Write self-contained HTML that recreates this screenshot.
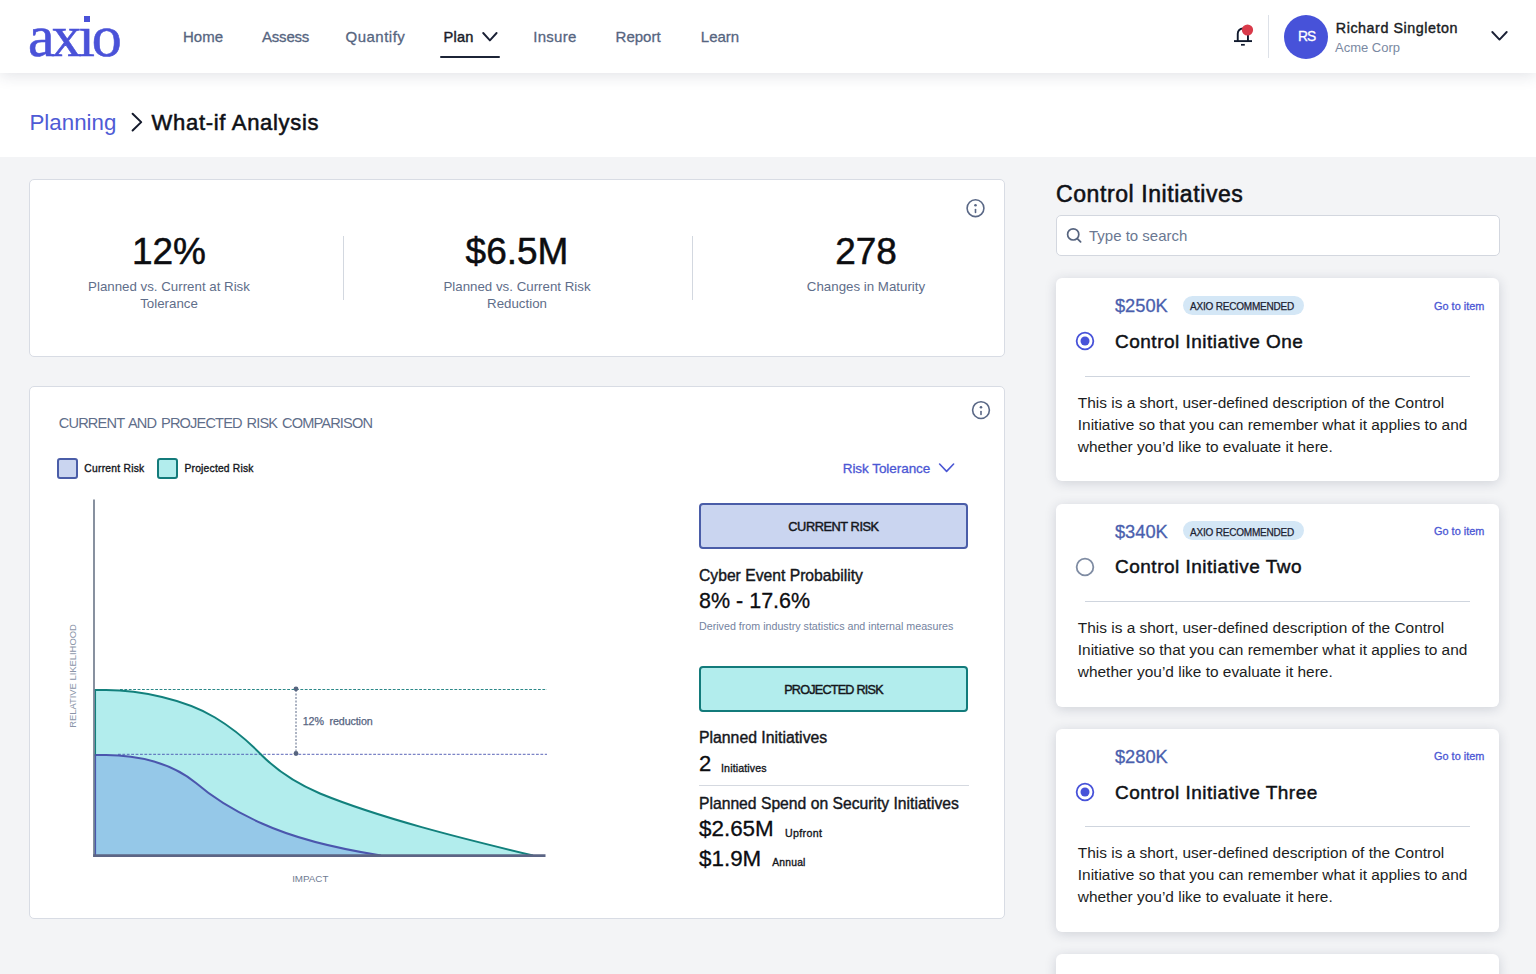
<!DOCTYPE html>
<html><head><meta charset="utf-8"><title>What-if Analysis</title>
<style>
html,body{margin:0;padding:0;}
body{width:1536px;height:974px;position:relative;overflow:hidden;background:#f3f4f6;font-family:"Liberation Sans", sans-serif;}
.t{position:absolute;line-height:1;white-space:nowrap;}
.b{position:absolute;}
svg.b{overflow:visible;}
</style></head><body>
<div class="b" style="left:0px;top:0px;width:1536px;height:73px;background:#fff;box-shadow:0 3px 14px rgba(40,50,80,0.13);z-index:2;"></div>
<div class="b" style="left:0px;top:73px;width:1536px;height:84px;background:#fff;"></div>
<div class='t' style='left:28px;top:5.50px;font-size:60px;color:#4a52d8;font-family:"Liberation Serif", serif;letter-spacing:-3.2px;z-index:3;-webkit-text-stroke:0.6px #4a52d8;'>axio</div>
<div class="b" style="left:80.5px;top:13.5px;width:12px;height:13px;background:#fff;z-index:4;"></div>
<div class="b" style="left:84.3px;top:16.1px;width:5.8px;height:5.7px;background:#4a52d8;z-index:5;"></div>
<div class='t' style='left:183px;top:29.20px;font-size:15px;color:#56657f;z-index:3;-webkit-text-stroke:0.3px #56657f;'>Home</div>
<div class='t' style='left:262px;top:29.20px;font-size:15px;color:#56657f;letter-spacing:-0.2px;z-index:3;-webkit-text-stroke:0.3px #56657f;'>Assess</div>
<div class='t' style='left:345.5px;top:29.20px;font-size:15px;color:#56657f;letter-spacing:0.5px;z-index:3;-webkit-text-stroke:0.3px #56657f;'>Quantify</div>
<div class='t' style='left:533.3px;top:29.20px;font-size:15px;color:#56657f;letter-spacing:0.25px;z-index:3;-webkit-text-stroke:0.3px #56657f;'>Insure</div>
<div class='t' style='left:615.6px;top:29.20px;font-size:15px;color:#56657f;z-index:3;-webkit-text-stroke:0.3px #56657f;'>Report</div>
<div class='t' style='left:700.8px;top:29.20px;font-size:15px;color:#56657f;z-index:3;-webkit-text-stroke:0.3px #56657f;'>Learn</div>
<div class='t' style='left:443.6px;top:29.54px;font-size:14.6px;color:#1a1d2a;letter-spacing:0.2px;z-index:3;-webkit-text-stroke:0.45px #1a1d2a;'>Plan</div>
<svg class="b" style="left:481px;top:30px;z-index:3" width="18" height="14" viewBox="0 0 18 14"><path d="M2.2 3 L8.9 10.4 L15.6 3" fill="none" stroke="#1a2035" stroke-width="1.9" stroke-linecap="round" stroke-linejoin="round"/></svg>
<div class="b" style="left:439.8px;top:55.6px;width:60.2px;height:2.7px;background:#1c2436;border-radius:1px;z-index:3;"></div>
<svg class="b" style="left:1228px;top:20px;z-index:3" width="30" height="30" viewBox="0 0 30 30"><path d="M9.75 21 V13.65 A5.1 5.1 0 0 1 19.95 13.65 V21" fill="none" stroke="#111a2e" stroke-width="1.9"/><path d="M6 21.1 H24" stroke="#111a2e" stroke-width="1.9"/><path d="M13 24.8 H16.8" stroke="#111a2e" stroke-width="1.7"/><circle cx="19.5" cy="10" r="5.6" fill="#d93a4a"/></svg>
<div class="b" style="left:1267.5px;top:15px;width:1.2px;height:43px;background:#dde1e8;z-index:3;"></div>
<div class="b" style="left:1284px;top:14.5px;width:44px;height:44px;background:#4752d9;border-radius:50%;z-index:3;"></div>
<div class='t' style='left:1306.6px;top:30.32px;font-size:13.8px;color:#fff;letter-spacing:-1.1px;transform:translateX(-50%);z-index:3;-webkit-text-stroke:0.3px #fff;'>RS</div>
<div class='t' style='left:1335.8px;top:20.89px;font-size:14.3px;color:#1a1d24;letter-spacing:0.55px;z-index:3;-webkit-text-stroke:0.4px #1a1d24;'>Richard Singleton</div>
<div class='t' style='left:1335px;top:41.39px;font-size:13px;color:#7a89a2;z-index:3;'>Acme Corp</div>
<svg class="b" style="left:1489px;top:28px;z-index:3" width="20" height="16" viewBox="0 0 20 16"><path d="M3.3 4 L10.5 11.6 L17.7 4" fill="none" stroke="#1a2035" stroke-width="1.9" stroke-linecap="round" stroke-linejoin="round"/></svg>
<div class='t' style='left:29.5px;top:111.52px;font-size:22.3px;color:#4f5bd5;'>Planning</div>
<svg class="b" style="left:126px;top:108px" width="22" height="28" viewBox="0 0 22 28"><path d="M6.6 5.8 L15.2 14.1 L6.6 22.5" fill="none" stroke="#141a2c" stroke-width="2" stroke-linecap="round" stroke-linejoin="round"/></svg>
<div class='t' style='left:151.6px;top:111.77px;font-size:22px;color:#0f1116;letter-spacing:0.7px;-webkit-text-stroke:0.55px #0f1116;'>What-if Analysis</div>
<div class="b" style="left:29px;top:178.5px;width:976px;height:178px;background:#fff;border:1px solid #d8dce4;border-radius:5px;box-sizing:border-box;"></div>
<div class='t' style='left:169px;top:233.07px;font-size:37px;color:#0c0d10;transform:translateX(-50%);-webkit-text-stroke:0.5px #0c0d10;'>12%</div>
<div class='t' style='left:169px;top:279.84px;font-size:13.3px;color:#5f6e8a;transform:translateX(-50%);'>Planned vs. Current at Risk</div>
<div class='t' style='left:169px;top:297.04px;font-size:13.3px;color:#5f6e8a;transform:translateX(-50%);'>Tolerance</div>
<div class='t' style='left:517px;top:233.07px;font-size:37px;color:#0c0d10;transform:translateX(-50%);-webkit-text-stroke:0.5px #0c0d10;'>$6.5M</div>
<div class='t' style='left:517px;top:279.84px;font-size:13.3px;color:#5f6e8a;transform:translateX(-50%);'>Planned vs. Current Risk</div>
<div class='t' style='left:517px;top:297.04px;font-size:13.3px;color:#5f6e8a;transform:translateX(-50%);'>Reduction</div>
<div class='t' style='left:866px;top:233.07px;font-size:37px;color:#0c0d10;transform:translateX(-50%);-webkit-text-stroke:0.5px #0c0d10;'>278</div>
<div class='t' style='left:866px;top:279.84px;font-size:13.3px;color:#5f6e8a;transform:translateX(-50%);'>Changes in Maturity</div>
<div class="b" style="left:342.7px;top:236px;width:1px;height:64px;background:#d3d8e0;"></div>
<div class="b" style="left:692px;top:236px;width:1px;height:64px;background:#d3d8e0;"></div>
<svg class="b" style="left:964px;top:196px" width="24" height="24" viewBox="0 0 24 24"><g transform="translate(-0.50,0.20)"><circle cx="12" cy="12" r="8.4" fill="none" stroke="#5a6886" stroke-width="1.6"/><circle cx="12" cy="9.1" r="1.3" fill="#5a6886"/><path d="M12 13.4 V16.3" stroke="#5a6886" stroke-width="1.6" stroke-linecap="round"/></g></svg>
<div class="b" style="left:29px;top:386px;width:976px;height:533px;background:#fff;border:1px solid #d8dce4;border-radius:5px;box-sizing:border-box;"></div>
<div class='t' style='left:58.8px;top:415.84px;font-size:14.6px;color:#5f6e8a;letter-spacing:-0.85px;word-spacing:1.6px;'>CURRENT AND PROJECTED RISK COMPARISON</div>
<svg class="b" style="left:969px;top:398px" width="24" height="24" viewBox="0 0 24 24"><g transform="translate(0.00,0.10)"><circle cx="12" cy="12" r="8.4" fill="none" stroke="#5a6886" stroke-width="1.6"/><circle cx="12" cy="9.1" r="1.3" fill="#5a6886"/><path d="M12 13.4 V16.3" stroke="#5a6886" stroke-width="1.6" stroke-linecap="round"/></g></svg>
<div class="b" style="left:57px;top:458px;width:21px;height:20.5px;background:#cad5f0;border:2px solid #4a5da8;border-radius:3px;box-sizing:border-box;"></div>
<div class='t' style='left:84.3px;top:464.08px;font-size:10.3px;color:#15171c;letter-spacing:0.25px;-webkit-text-stroke:0.35px #15171c;'>Current Risk</div>
<div class="b" style="left:157.3px;top:458px;width:21px;height:20.5px;background:#b2eded;border:2px solid #137b7b;border-radius:3px;box-sizing:border-box;"></div>
<div class='t' style='left:184.5px;top:464.08px;font-size:10.3px;color:#15171c;letter-spacing:0.2px;-webkit-text-stroke:0.35px #15171c;'>Projected Risk</div>
<div class='t' style='left:842.7px;top:461.57px;font-size:13.5px;color:#4b57d4;letter-spacing:-0.05px;-webkit-text-stroke:0.3px #4b57d4;'>Risk Tolerance</div>
<svg class="b" style="left:936px;top:459px" width="22" height="16" viewBox="0 0 22 16"><path d="M3.6 5 L10.6 12.4 L17.6 5" fill="none" stroke="#4b57d4" stroke-width="1.6" stroke-linecap="round" stroke-linejoin="round"/></svg>
<svg class="b" style="left:0;top:0" width="1536" height="974" viewBox="0 0 1536 974"><path d="M94.5 690.1 L106 690.1 C140 690.1 185 699.5 215 717.5 C235 729.5 250 743 262 755.5 C275 768.5 292 781.5 320 793.5 C380 818 460 838 533 855.5 L94.5 855.5 Z" fill="#b2eded"/><path d="M94.5 754.9 L106 754.9 C138 754.9 172 763 196 783 C211 796 232 810 262 823.5 C296 839 340 849 381 855.5 L94.5 855.5 Z" fill="#95c8e8"/><path d="M120 689.5 H547" stroke="#137b7b" stroke-width="0.9" stroke-dasharray="2.8 1.6"/><path d="M118 754.3 H547" stroke="#4a55b0" stroke-width="0.9" stroke-dasharray="2.8 1.6"/><path d="M296 690 V753" stroke="#5a6886" stroke-width="1" stroke-dasharray="2 1.5"/><circle cx="296" cy="688.8" r="2.4" fill="#56647f"/><circle cx="296" cy="753.5" r="2.4" fill="#56647f"/><path d="M94.5 690.1 L106 690.1 C140 690.1 185 699.5 215 717.5 C235 729.5 250 743 262 755.5 C275 768.5 292 781.5 320 793.5 C380 818 460 838 533 855.5" fill="none" stroke="#12807c" stroke-width="2"/><path d="M94.5 754.9 L106 754.9 C138 754.9 172 763 196 783 C211 796 232 810 262 823.5 C296 839 340 849 381 855.5" fill="none" stroke="#4b56ad" stroke-width="2"/><path d="M95.4 689.5 V855" stroke="#12807c" stroke-width="1.3"/><path d="M95.4 754.3 V855" stroke="#4b56ad" stroke-width="1.3"/><path d="M94 499.5 V857" stroke="#6a7588" stroke-width="1.6"/><path d="M93.2 855.6 H545.5" stroke="#5c6585" stroke-width="2.6"/></svg>
<div class='t' style='left:302.7px;top:715.94px;font-size:10.7px;color:#56647f;letter-spacing:-0.1px;-webkit-text-stroke:0.25px #56647f;'>12%&nbsp; reduction</div>
<div class='t' style='left:310.3px;top:874.00px;font-size:9.8px;color:#6f7b92;transform:translateX(-50%);'>IMPACT</div>
<div class='t' style='left:73.3px;top:668.24px;font-size:9.4px;color:#8a94a8;transform:translate(-50%,-50%) rotate(-90deg);line-height:1;top:676.2px;'>RELATIVE LIKELIHOOD</div>
<div class="b" style="left:699px;top:503.2px;width:269px;height:46px;background:#cad5f0;border:2px solid #4a5da8;border-radius:4px;box-sizing:border-box;"></div>
<div class='t' style='left:833.5px;top:521.06px;font-size:12.8px;color:#15171c;letter-spacing:-0.45px;transform:translateX(-50%);-webkit-text-stroke:0.45px #15171c;'>CURRENT RISK</div>
<div class='t' style='left:699px;top:567.71px;font-size:15.7px;color:#15171c;-webkit-text-stroke:0.4px #15171c;'>Cyber Event Probability</div>
<div class='t' style='left:699px;top:590.60px;font-size:21.5px;color:#0c0d10;-webkit-text-stroke:0.3px #0c0d10;'>8% - 17.6%</div>
<div class='t' style='left:699px;top:620.84px;font-size:10.7px;color:#7483a0;'>Derived from industry statistics and internal measures</div>
<div class="b" style="left:699px;top:666px;width:269px;height:46px;background:#b2eded;border:2px solid #137b7b;border-radius:4px;box-sizing:border-box;"></div>
<div class='t' style='left:833.5px;top:683.93px;font-size:12.6px;color:#15171c;letter-spacing:-0.75px;transform:translateX(-50%);-webkit-text-stroke:0.45px #15171c;'>PROJECTED RISK</div>
<div class='t' style='left:699px;top:730.12px;font-size:15.8px;color:#15171c;-webkit-text-stroke:0.4px #15171c;'>Planned Initiatives</div>
<div class='t' style='left:699px;top:752.87px;font-size:22px;color:#0c0d10;-webkit-text-stroke:0.3px #0c0d10;'>2</div>
<div class='t' style='left:721px;top:762.52px;font-size:10.6px;color:#15171c;letter-spacing:0.15px;-webkit-text-stroke:0.35px #15171c;'>Initiatives</div>
<div class="b" style="left:699px;top:784.5px;width:269.5px;height:1.2px;background:#d5d9e0;"></div>
<div class='t' style='left:699px;top:795.91px;font-size:15.7px;color:#15171c;-webkit-text-stroke:0.4px #15171c;'>Planned Spend on Security Initiatives</div>
<div class='t' style='left:699px;top:818.23px;font-size:22.4px;color:#0c0d10;-webkit-text-stroke:0.3px #0c0d10;'>$2.65M</div>
<div class='t' style='left:785px;top:828.02px;font-size:10.6px;color:#15171c;letter-spacing:0.35px;-webkit-text-stroke:0.35px #15171c;'>Upfront</div>
<div class='t' style='left:699px;top:847.53px;font-size:22.4px;color:#0c0d10;-webkit-text-stroke:0.3px #0c0d10;'>$1.9M</div>
<div class='t' style='left:772.3px;top:857.78px;font-size:10.3px;color:#15171c;letter-spacing:0.2px;-webkit-text-stroke:0.35px #15171c;'>Annual</div>
<div class='t' style='left:1056px;top:182.53px;font-size:23px;color:#0f1116;letter-spacing:0.58px;-webkit-text-stroke:0.55px #0f1116;'>Control Initiatives</div>
<div class="b" style="left:1056px;top:215px;width:444px;height:40.5px;background:#fff;border:1px solid #d3d7df;border-radius:5px;box-sizing:border-box;"></div>
<svg class="b" style="left:1062px;top:223px" width="24" height="24" viewBox="0 0 24 24"><circle cx="11.2" cy="11.4" r="5.6" fill="none" stroke="#56647f" stroke-width="1.7"/><path d="M15.3 15.6 L18.6 18.9" stroke="#56647f" stroke-width="1.8" stroke-linecap="round"/></svg>
<div class='t' style='left:1089px;top:227.90px;font-size:15px;color:#6a7892;'>Type to search</div>
<div class="b" style="left:1056px;top:278px;width:443px;height:203px;background:#fff;border-radius:6px;box-shadow:0 2px 12px rgba(30,40,70,0.17);"></div>
<div class='t' style='left:1114.9px;top:297.21px;font-size:18.3px;color:#4a5fae;-webkit-text-stroke:0.3px #4a5fae;'>$250K</div>
<div class="b" style="left:1182.7px;top:295.7px;width:121px;height:19px;background:#d4e7f6;border-radius:9.5px;"></div>
<div class='t' style='left:1190px;top:302.03px;font-size:10px;color:#1c2333;letter-spacing:-0.2px;-webkit-text-stroke:0.25px #1c2333;'>AXIO RECOMMENDED</div>
<div class='t' style='right:51.700000000000045px;top:300.77px;font-size:10.9px;color:#4b57d4;-webkit-text-stroke:0.3px #4b57d4;'>Go to item</div>
<svg class="b" style="left:1075px;top:331px" width="20" height="20" viewBox="0 0 20 20"><circle cx="10" cy="10" r="8.35" fill="none" stroke="#4752d9" stroke-width="1.8"/><circle cx="10" cy="10" r="4.5" fill="#4752d9"/></svg>
<div class='t' style='left:1115px;top:331.91px;font-size:19px;color:#0f1116;letter-spacing:0.5px;-webkit-text-stroke:0.45px #0f1116;'>Control Initiative One</div>
<div class="b" style="left:1085px;top:375.5px;width:385px;height:1px;background:#cfd5de;"></div>
<div class='t' style='left:1077.8px;top:394.72px;font-size:15.45px;color:#1b1d22;'>This is a short, user-defined description of the Control</div>
<div class='t' style='left:1077.8px;top:416.72px;font-size:15.45px;color:#1b1d22;'>Initiative so that you can remember what it applies to and</div>
<div class='t' style='left:1077.8px;top:438.72px;font-size:15.45px;color:#1b1d22;'>whether you’d like to evaluate it here.</div>
<div class="b" style="left:1056px;top:503.5px;width:443px;height:203px;background:#fff;border-radius:6px;box-shadow:0 2px 12px rgba(30,40,70,0.17);"></div>
<div class='t' style='left:1114.9px;top:522.71px;font-size:18.3px;color:#4a5fae;-webkit-text-stroke:0.3px #4a5fae;'>$340K</div>
<div class="b" style="left:1182.7px;top:521.2px;width:121px;height:19px;background:#d4e7f6;border-radius:9.5px;"></div>
<div class='t' style='left:1190px;top:527.53px;font-size:10px;color:#1c2333;letter-spacing:-0.2px;-webkit-text-stroke:0.25px #1c2333;'>AXIO RECOMMENDED</div>
<div class='t' style='right:51.700000000000045px;top:526.27px;font-size:10.9px;color:#4b57d4;-webkit-text-stroke:0.3px #4b57d4;'>Go to item</div>
<svg class="b" style="left:1075px;top:556.5px" width="20" height="20" viewBox="0 0 20 20"><circle cx="10" cy="10" r="8.35" fill="none" stroke="#7f8ca3" stroke-width="1.8"/></svg>
<div class='t' style='left:1115px;top:557.41px;font-size:19px;color:#0f1116;letter-spacing:0.5px;-webkit-text-stroke:0.45px #0f1116;'>Control Initiative Two</div>
<div class="b" style="left:1085px;top:601.0px;width:385px;height:1px;background:#cfd5de;"></div>
<div class='t' style='left:1077.8px;top:620.22px;font-size:15.45px;color:#1b1d22;'>This is a short, user-defined description of the Control</div>
<div class='t' style='left:1077.8px;top:642.22px;font-size:15.45px;color:#1b1d22;'>Initiative so that you can remember what it applies to and</div>
<div class='t' style='left:1077.8px;top:664.22px;font-size:15.45px;color:#1b1d22;'>whether you’d like to evaluate it here.</div>
<div class="b" style="left:1056px;top:728.6px;width:443px;height:203px;background:#fff;border-radius:6px;box-shadow:0 2px 12px rgba(30,40,70,0.17);"></div>
<div class='t' style='left:1114.9px;top:747.81px;font-size:18.3px;color:#4a5fae;-webkit-text-stroke:0.3px #4a5fae;'>$280K</div>
<div class='t' style='right:51.700000000000045px;top:751.37px;font-size:10.9px;color:#4b57d4;-webkit-text-stroke:0.3px #4b57d4;'>Go to item</div>
<svg class="b" style="left:1075px;top:781.6px" width="20" height="20" viewBox="0 0 20 20"><circle cx="10" cy="10" r="8.35" fill="none" stroke="#4752d9" stroke-width="1.8"/><circle cx="10" cy="10" r="4.5" fill="#4752d9"/></svg>
<div class='t' style='left:1115px;top:782.51px;font-size:19px;color:#0f1116;letter-spacing:0.5px;-webkit-text-stroke:0.45px #0f1116;'>Control Initiative Three</div>
<div class="b" style="left:1085px;top:826.1px;width:385px;height:1px;background:#cfd5de;"></div>
<div class='t' style='left:1077.8px;top:845.32px;font-size:15.45px;color:#1b1d22;'>This is a short, user-defined description of the Control</div>
<div class='t' style='left:1077.8px;top:867.32px;font-size:15.45px;color:#1b1d22;'>Initiative so that you can remember what it applies to and</div>
<div class='t' style='left:1077.8px;top:889.32px;font-size:15.45px;color:#1b1d22;'>whether you’d like to evaluate it here.</div>
<div class="b" style="left:1056px;top:953.8px;width:443px;height:203px;background:#fff;border-radius:6px;box-shadow:0 2px 12px rgba(30,40,70,0.17);"></div>
</body></html>
